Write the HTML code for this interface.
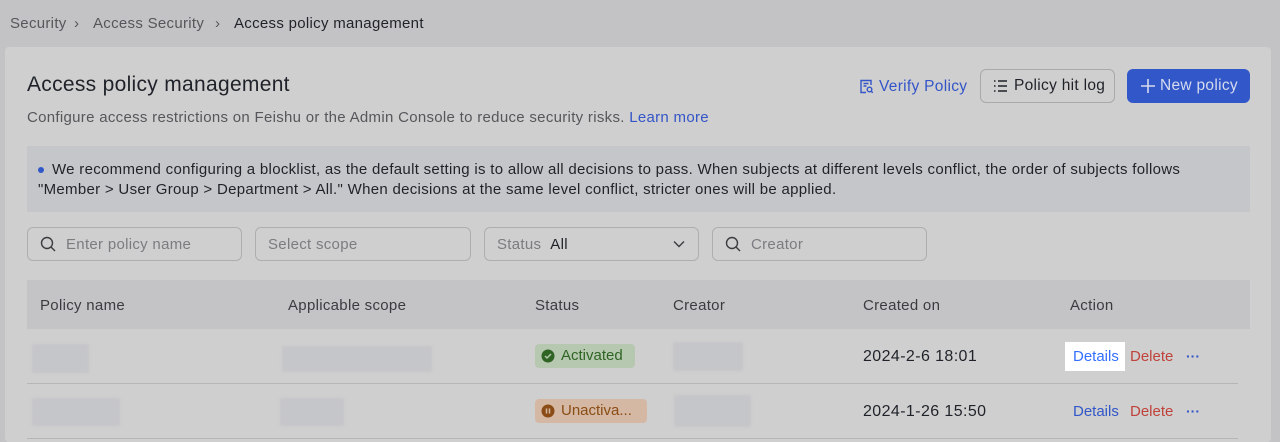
<!DOCTYPE html>
<html><head><meta charset="utf-8"><style>
*{box-sizing:border-box;margin:0;padding:0}
body{width:1280px;height:442px;background:#c3c3c5;font-family:"Liberation Sans",sans-serif;position:relative;overflow:hidden;color:#1f2329;letter-spacing:0.3px}
.a{position:absolute;white-space:nowrap}
.card{position:absolute;left:5px;top:47px;width:1266px;height:395px;background:#cfcfcf;border-radius:4px}
.inp{position:absolute;top:227px;height:34px;border:1px solid #aeaeb0;border-radius:6px;font-size:15px;color:#7a7c80;line-height:33px;padding-left:12px}
.th{position:absolute;top:280px;left:27px;width:1223px;height:49px;background:#c4c4c6}
.blur{position:absolute;background:#c5c6c9;filter:blur(1px)}
.tag{position:absolute;height:24px;border-radius:4px;font-size:15px;line-height:24px;padding-left:26px}
.f15{font-size:15px}
</style></head><body>
<div class="a f15" style="left:10px;top:15px;color:#55575b">Security</div>
<div class="a f15" style="left:74px;top:15px;color:#55575b">›</div>
<div class="a f15" style="left:93px;top:15px;color:#55575b">Access Security</div>
<div class="a f15" style="left:215px;top:15px;color:#55575b">›</div>
<div class="a f15" style="left:234px;top:15px;color:#1f2329">Access policy management</div>
<div class="card"></div>
<div class="a" style="left:27px;top:73px;font-size:21px;color:#1f2329">Access policy management</div>
<div class="a f15" style="left:27px;top:109px;color:#55575b">Configure access restrictions on Feishu or the Admin Console to reduce security risks. <span style="color:#3355c8">Learn more</span></div>
<svg class="a" style="left:859px;top:79px" width="15" height="15" viewBox="0 0 15 15" fill="none" stroke="#3355c8" stroke-width="1.4"><path d="M12 6V1.5H2v12h5M4.5 4.5h5M4.5 7h3"/><circle cx="10.5" cy="10.5" r="2.3"/><path d="M12.2 12.2l1.6 1.6"/></svg>
<div class="a" style="left:879px;top:78px;font-size:15.5px;color:#3355c8">Verify Policy</div>
<div class="a" style="left:980px;top:69px;width:135px;height:34px;border:1px solid #a9a9ab;border-radius:6px;font-size:15.5px;line-height:32px;padding-left:33px">Policy hit log</div>
<svg class="a" style="left:993px;top:79px" width="15" height="14" viewBox="0 0 15 14" stroke="#1f2329" stroke-width="1.4"><path d="M1 2h1.5M1 7h1.5M1 12h1.5M5 2h9M5 7h9M5 12h9"/></svg>
<div class="a" style="left:1127px;top:69px;width:123px;height:34px;background:#3157c9;border-radius:6px;font-size:15.5px;line-height:34px;color:#d5dbee;padding-left:33px">New policy</div>
<svg class="a" style="left:1140px;top:78px" width="16" height="16" stroke="#d5dbee" stroke-width="1.6"><path d="M8 1v14M1 8h14"/></svg>
<div class="a" style="left:27px;top:146px;width:1223px;height:66px;background:#c5c6c9;border-radius:2px"></div>
<div class="a" style="left:38px;top:167px;width:6px;height:6px;border-radius:3px;background:#3157c9"></div>
<div class="a f15" style="left:52px;top:160px;line-height:20px;color:#1f2329">We recommend configuring a blocklist, as the default setting is to allow all decisions to pass. When subjects at different levels conflict, the order of subjects follows</div>
<div class="a f15" style="left:38px;top:180px;line-height:20px;color:#1f2329">"Member &gt; User Group &gt; Department &gt; All." When decisions at the same level conflict, stricter ones will be applied.</div>
<div class="inp" style="left:27px;width:215px;padding-left:38px">Enter policy name</div>
<svg class="a" style="left:40px;top:236px" width="16" height="16" fill="none" stroke="#3a3c40" stroke-width="1.4"><circle cx="7" cy="7" r="5.5"/><path d="M11 11l4 4"/></svg>
<div class="inp" style="left:255px;width:216px">Select scope</div>
<div class="inp" style="left:484px;width:215px">Status &nbsp;<span style="color:#1f2329">All</span></div>
<svg class="a" style="left:673px;top:240px" width="12" height="8" fill="none" stroke="#3a3c40" stroke-width="1.4"><path d="M1 1.5l5 5 5-5"/></svg>
<div class="inp" style="left:712px;width:215px;padding-left:38px">Creator</div>
<svg class="a" style="left:725px;top:236px" width="16" height="16" fill="none" stroke="#3a3c40" stroke-width="1.4"><circle cx="7" cy="7" r="5.5"/><path d="M11 11l4 4"/></svg>
<div class="th"></div>
<div class="a f15" style="left:40px;top:297px;color:#3a3c40">Policy name</div>
<div class="a f15" style="left:288px;top:297px;color:#3a3c40">Applicable scope</div>
<div class="a f15" style="left:535px;top:297px;color:#3a3c40">Status</div>
<div class="a f15" style="left:673px;top:297px;color:#3a3c40">Creator</div>
<div class="a f15" style="left:863px;top:297px;color:#3a3c40">Created on</div>
<div class="a f15" style="left:1070px;top:297px;color:#3a3c40">Action</div>
<div class="blur" style="left:32px;top:344px;width:57px;height:29px"></div>
<div class="blur" style="left:282px;top:346px;width:150px;height:26px"></div>
<div class="blur" style="left:673px;top:342px;width:70px;height:29px"></div>
<div class="tag" style="left:535px;top:344px;width:100px;background:#b7c8b0;color:#2f6424;letter-spacing:0">Activated</div>
<svg class="a" style="left:541px;top:349px" width="14" height="14"><circle cx="7" cy="7" r="6.5" fill="#2f6424"/><path d="M4 7l2 2 4-4" stroke="#b7c8b0" stroke-width="1.5" fill="none"/></svg>
<div class="a" style="left:863px;top:348px;font-size:16px;color:#1f2329;letter-spacing:0.4px">2024-2-6 18:01</div>
<div class="a" style="left:1065px;top:342px;width:60px;height:29px;background:#fff"></div>
<div class="a f15" style="left:1073px;top:348px;color:#3370ff;letter-spacing:0">Details</div>
<div class="a f15" style="left:1130px;top:348px;color:#c0423a;letter-spacing:0">Delete</div>
<div class="a" style="left:1186px;top:348px;font-size:14px;color:#3157c9;font-weight:bold;letter-spacing:0">···</div>
<div class="a" style="left:27px;top:383px;width:1211px;height:1px;background:#b6b6b8"></div>
<div class="blur" style="left:32px;top:398px;width:88px;height:28px"></div>
<div class="blur" style="left:280px;top:398px;width:64px;height:28px"></div>
<div class="blur" style="left:674px;top:395px;width:77px;height:32px"></div>
<div class="tag" style="left:535px;top:399px;width:112px;background:#d4b8a3;color:#8a4c14;letter-spacing:0">Unactiva...</div>
<svg class="a" style="left:541px;top:404px" width="14" height="14"><circle cx="7" cy="7" r="6.5" fill="#8a4c14"/><path d="M5.5 4.5v5M8.5 4.5v5" stroke="#d4b8a3" stroke-width="1.5"/></svg>
<div class="a" style="left:863px;top:403px;font-size:16px;color:#1f2329;letter-spacing:0.4px">2024-1-26 15:50</div>
<div class="a f15" style="left:1073px;top:403px;color:#3157c9;letter-spacing:0">Details</div>
<div class="a f15" style="left:1130px;top:403px;color:#c0423a;letter-spacing:0">Delete</div>
<div class="a" style="left:1186px;top:403px;font-size:14px;color:#3157c9;font-weight:bold;letter-spacing:0">···</div>
<div class="a" style="left:27px;top:438px;width:1211px;height:1px;background:#b6b6b8"></div>
</body></html>
